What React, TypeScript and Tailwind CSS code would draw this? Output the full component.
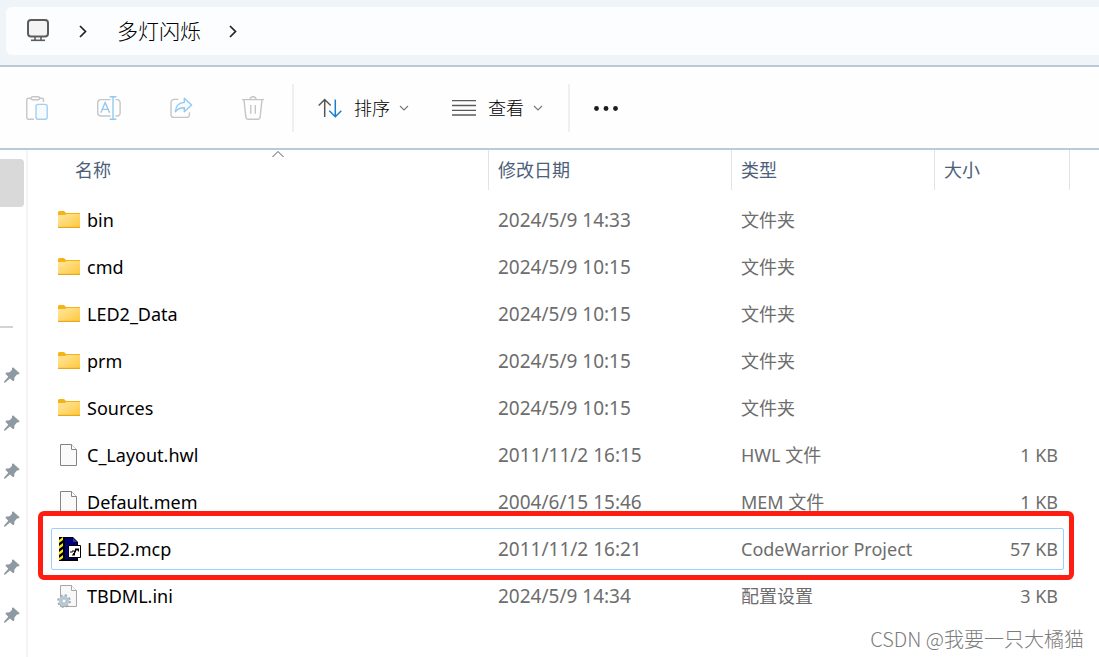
import React from "react";
import clsx from "clsx";

type FileKind = "folder" | "blank" | "mcp" | "ini";

interface FileEntry {
  name: string;
  date: string;
  type: string;
  size: string;
  kind: FileKind;
  selected?: boolean;
}

const files: FileEntry[] = [
  { name: "bin", date: "2024/5/9 14:33", type: "文件夹", size: "", kind: "folder" },
  { name: "cmd", date: "2024/5/9 10:15", type: "文件夹", size: "", kind: "folder" },
  { name: "LED2_Data", date: "2024/5/9 10:15", type: "文件夹", size: "", kind: "folder" },
  { name: "prm", date: "2024/5/9 10:15", type: "文件夹", size: "", kind: "folder" },
  { name: "Sources", date: "2024/5/9 10:15", type: "文件夹", size: "", kind: "folder" },
  { name: "C_Layout.hwl", date: "2011/11/2 16:15", type: "HWL 文件", size: "1 KB", kind: "blank" },
  { name: "Default.mem", date: "2004/6/15 15:46", type: "MEM 文件", size: "1 KB", kind: "blank" },
  { name: "LED2.mcp", date: "2011/11/2 16:21", type: "CodeWarrior Project", size: "57 KB", kind: "mcp", selected: true },
  { name: "TBDML.ini", date: "2024/5/9 14:34", type: "配置设置", size: "3 KB", kind: "ini" },
];

const pins = [0, 1, 2, 3, 4, 5];

/* ---------- Toolbar icons ---------- */

const MonitorIcon = () => (
  <svg width="24" height="24" viewBox="0 0 24 24" fill="none" stroke="#5c5c5c" strokeWidth="2">
    <rect x="2" y="1" width="20" height="16.500" rx="3" fill="#f4f4f4" />
    <path d="M9 17.500v4M15 17.500v4" strokeWidth="1.600" />
    <path d="M5 21.300h14" strokeWidth="1.600" />
  </svg>
);

const ChevronRight = () => (
  <svg width="8" height="14" viewBox="0 0 8 14" fill="none" stroke="#222" strokeWidth="1.700">
    <path d="M1 2 6.500 7.500 1 13" />
  </svg>
);

const ChevronDown = () => (
  <svg width="10" height="8" viewBox="0 0 10 8" fill="none" stroke="#777" strokeWidth="1.100">
    <path d="M1 2l4 4 4-4" />
  </svg>
);

const PasteIcon = () => (
  <svg width="24" height="24" viewBox="0 0 24 24" fill="none" strokeWidth="1.400">
    <path d="M9 23.200H3.500A1.700 1.700 0 0 1 1.800 21.500V4A1.700 1.700 0 0 1 3.500 2.300H6M14.500 2.300h2.300A1.700 1.700 0 0 1 18.500 4v2" stroke="#c6c6c6" />
    <rect x="6" y="0.800" width="8.600" height="3" rx="1.500" stroke="#c6c6c6" />
    <rect x="11" y="8.400" width="11.200" height="14.800" rx="2" stroke="#a4d0ef" fill="#f6fbff" />
  </svg>
);

const RenameIcon = () => (
  <svg width="24" height="24" viewBox="0 0 24 24" fill="none" strokeWidth="1.400">
    <path d="M13.500 3.600H3.800A3.200 3.200 0 0 0 .7 6.800v10A3.200 3.200 0 0 0 3.800 20h9.700M18.500 3.600h1.400a3.200 3.200 0 0 1 3.200 3.200v10a3.200 3.200 0 0 1-3.200 3.200h-1.400" stroke="#c6c6c6" />
    <path d="M3.800 16.800 8.200 6.500l4.400 10.300M5.300 13.400h5.800M16 1v22.300M12.600.8h6.800M12.600 23.300h6.800" stroke="#93c9ef" />
  </svg>
);

const ShareIcon = () => (
  <svg width="24" height="24" viewBox="0 0 24 24" fill="none" strokeWidth="1.400" strokeLinejoin="round">
    <path d="M9.500 3.400H5.200A3.200 3.200 0 0 0 2 6.600v11.600a3.200 3.200 0 0 0 3.200 3.200h12a3.200 3.200 0 0 0 3.200-3.200v-2" stroke="#c6c6c6" />
    <path d="M15.300 2.200 22.600 9l-7.300 6.800v-4.100c-4.300 0-6.900 1.300-9 4 .5-5.400 3.500-9.100 9-9.300z" stroke="#93c9ef" fill="#f6fbff" />
  </svg>
);

const TrashIcon = () => (
  <svg width="24" height="24" viewBox="0 0 24 24" fill="none" stroke="#c6c6c6" strokeWidth="1.400">
    <path d="M1 3.600h22M9 3.400a3 2.600 0 0 1 6 0M3 3.800l1.900 17.600a2 2 0 0 0 2 1.800h10.200a2 2 0 0 0 2-1.800L21 3.800M9.800 9v8.800M14.300 9v8.800" />
  </svg>
);

const SortIcon = () => (
  <svg width="24" height="24" viewBox="0 0 24 24" fill="none" strokeWidth="1.500">
    <path d="M6.700 21V4M.7 9.500l6-6 6 6" stroke="#555" />
    <path d="M17.300 3.500v17M11.300 14.800l6 6 6-6" stroke="#1a7fd0" />
  </svg>
);

const ViewIcon = () => (
  <svg width="24" height="24" viewBox="0 0 24 24" stroke="#5b5b5b" strokeWidth="1.300">
    <path d="M0 4.600h24M0 9.500h24M0 14.400h24M0 19h24" />
  </svg>
);

const MoreIcon = () => (
  <svg width="26" height="6" viewBox="0 0 26 6" fill="#1c1c1c">
    <circle cx="2.500" cy="3.500" r="2.400" />
    <circle cx="12" cy="3.500" r="2.400" />
    <circle cx="21.500" cy="3.500" r="2.400" />
  </svg>
);

const PinIcon = () => (
  <svg width="16" height="16" viewBox="0 0 16 16" fill="#8e9aa2">
    <path d="M9 .3 15.700 6.200 14.800 7.300 13 7.500 10.400 10.500 10.300 13.200 9.200 14.300 6 11.400 1 15.700 0 15.500.1 14.500 4.300 9.700 1.400 6.700 2.500 5.600 5.700 5.200 8 2.800 8 1.200z" />
  </svg>
);

/* ---------- File icons ---------- */

const FolderIcon = () => (
  <svg width="24" height="24" viewBox="0 0 24 24">
    <defs>
      <linearGradient id="folder-face" x1="0" y1="0" x2="1" y2="1">
        <stop offset="0" stopColor="#ffe7a0" />
        <stop offset="1" stopColor="#ffc83c" />
      </linearGradient>
    </defs>
    <path d="M1 4.500q0-1.500 1.500-1.500H7l2 2h14v4H1z" fill="#f5b316" />
    <path d="M1 7h7l1.500-1H23v13.500H1z" fill="url(#folder-face)" />
    <path d="M1 18.800h22V20H1z" fill="#e5a820" />
  </svg>
);

const BlankIcon = () => (
  <svg width="24" height="24" viewBox="0 0 24 24">
    <path d="M3.500 1.500h11l5 5v16h-16z" fill="#fafafa" stroke="#858585" />
    <path d="M14.500 1.500v5h5" fill="#fff" stroke="#858585" />
  </svg>
);

const IniIcon = () => (
  <svg width="24" height="24" viewBox="0 0 24 24">
    <path d="M3.500 1.500h11l5 5v16h-16z" fill="#f8f8f8" stroke="#a6a6a6" />
    <path d="M14.500 1.500v5h5" fill="#fff" stroke="#a6a6a6" />
    <circle cx="7" cy="17" r="5.800" fill="none" stroke="#9ba9b3" strokeWidth="2" strokeDasharray="2.280 2.280" />
    <circle cx="7" cy="17" r="3.700" fill="#fff" stroke="#b9c8d3" strokeWidth="3" />
    <circle cx="7" cy="17" r="2" fill="#fff" stroke="#93a5b3" strokeWidth=".7" />
  </svg>
);

const McpIcon = () => (
  <svg width="24" height="24" viewBox="0 0 24 24">
    <path d="M2 0h14l5 5v19H2z" fill="#000" />
    <path d="M8 1h8v4h4v17H8z" fill="#000078" />
    <path d="M16 1l4 4h-4z" fill="#3a3a8c" />
    <path d="M2 3l4-3v3L2 6zM2 9l4-3v3L2 12zM2 15l4-3v3l-4 3zM2 21l4-3v3l-3 2H2z" fill="#f5ea18" />
    <path d="M11.500 8.500h12v12h-12z" fill="#fff" stroke="#000" />
    <path d="M13 14.500h2v-1h3v-2h4v3h-1v-1h-2v2h-1v3h-3v-1h1v-2h-3z" fill="#000" />
    <path d="M15.500 14.500h1.500v1.500h-1.500z" fill="#fff" />
  </svg>
);

const FileIcon = ({ kind }: { kind: FileKind }) => {
  if (kind === "folder") return <FolderIcon />;
  if (kind === "mcp") return <McpIcon />;
  if (kind === "ini") return <IniIcon />;
  return <BlankIcon />;
};

/* ---------- Sections ---------- */

const AddressBar = () => (
  <header className="border-b-2 border-[#b9cad8] bg-[#eff4f9] pt-[7px] pb-[10px] pl-1.5">
    <nav aria-label="路径" className="flex h-12 items-center rounded-l-md bg-[#fcfdfe] pl-5">
      <button type="button" aria-label="此电脑">
        <MonitorIcon />
      </button>
      <span className="ml-[29px]">
        <ChevronRight />
      </span>
      <button type="button" className="ml-[30px] text-[21px] leading-7 text-black">
        多灯闪烁
      </button>
      <span className="ml-7">
        <ChevronRight />
      </span>
    </nav>
  </header>
);

const Divider = () => <span className="h-12 w-0.5 bg-[#efefef]" />;

const Toolbar = () => (
  <div role="toolbar" className="flex h-[83px] items-center border-b-2 border-[#b9cad8] bg-[#fefefe] pl-[25px] text-lg text-black">
    <div className="mr-[27px] flex gap-12">
      <button type="button" aria-label="粘贴" disabled><PasteIcon /></button>
      <button type="button" aria-label="重命名" disabled><RenameIcon /></button>
      <button type="button" aria-label="共享" disabled><ShareIcon /></button>
      <button type="button" aria-label="删除" disabled><TrashIcon /></button>
    </div>
    <Divider />
    <button type="button" className="ml-6 flex items-center">
      <SortIcon />
      <span className="mr-[9px] ml-3">排序</span>
      <ChevronDown />
    </button>
    <button type="button" className="mr-[25px] ml-[43px] flex items-center">
      <ViewIcon />
      <span className="mr-[9px] ml-3">查看</span>
      <ChevronDown />
    </button>
    <Divider />
    <button type="button" aria-label="更多" className="ml-6">
      <MoreIcon />
    </button>
  </div>
);

const Sidebar = () => (
  <aside className="w-7 shrink-0 border-r-2 border-[#f5f5f5] pt-[9px]">
    <div className="h-12 w-6 rounded-r-sm bg-[#d9d9d9]" />
    <div className="mt-[119px] h-0.5 w-[13px] bg-[#d3d3d3]" />
    <ul className="mt-[39px] flex flex-col gap-8 pl-1">
      {pins.map((pin) => (
        <li key={pin}><PinIcon /></li>
      ))}
    </ul>
  </aside>
);

const HeaderCell = ({ label }: { label: string }) => (
  <th scope="col" className="h-[47px] p-0 align-top font-normal">
    <button type="button" className="flex h-10 w-full items-center border-r border-[#e3e3e3] pl-[9px]">
      {label}
    </button>
  </th>
);

const FileRow = ({ file }: { file: FileEntry }) => (
  <tr className={clsx("h-[47px]", file.selected && "relative")}>
    <td className="p-0 pb-0.5">
      <div className="flex items-center gap-1.5 pl-[29px] text-black">
        <span className="h-6 w-6 shrink-0 [&>svg]:block">
          <FileIcon kind={file.kind} />
        </span>
        <span className="text-lg">{file.name}</span>
      </div>
      {/* selection outline and highlight frame */}
      {file.selected && (
        <>
          <span className="pointer-events-none absolute top-0.5 right-[35px] bottom-[3px] left-[23px] rounded-xs border border-[#99d1ff]" />
          <span className="pointer-events-none absolute top-[-15px] right-[25px] bottom-[-7px] left-2.5 rounded-md border-[5px] border-[#ff1c10]" />
        </>
      )}
    </td>
    <td className="p-0 pl-[9px] text-[19px]">{file.date}</td>
    <td className="p-0 pb-0.5 pl-[9px] text-lg">{file.type}</td>
    <td className="p-0 pr-3 pb-0.5 text-right text-lg">{file.size}</td>
    <td className="p-0" />
  </tr>
);

const FileTable = () => (
  <table className="w-full table-fixed border-collapse text-left font-normal whitespace-nowrap text-[#6d6d6d]">
    <colgroup>
      <col />
      <col className="w-[243px]" />
      <col className="w-[203px]" />
      <col className="w-[135px]" />
      <col className="w-[29px]" />
    </colgroup>
    <thead className="text-lg text-[#4c607a]">
      <tr>
        <th scope="col" className="h-[47px] p-0 align-top font-normal">
          <button type="button" className="flex h-10 w-full border-r border-[#e3e3e3] pl-[39px]">
            <span className="relative flex h-full w-full items-center pl-2">
              名称
              <svg className="absolute top-0 left-1/2 -translate-x-1/2" width="12" height="8" viewBox="0 0 12 8" fill="none" stroke="#555">
                <path d="M.5 7 6 1.500l5.500 5.500" />
              </svg>
            </span>
          </button>
        </th>
        <HeaderCell label="修改日期" />
        <HeaderCell label="类型" />
        <HeaderCell label="大小" />
        <td />
      </tr>
    </thead>
    <tbody>
      {files.map((file) => (
        <FileRow key={file.name} file={file} />
      ))}
    </tbody>
  </table>
);

export default function App() {
  return (
    <div className="relative flex min-h-screen flex-col overflow-hidden bg-white font-['Noto_Sans','Noto_Sans_CJK_SC',sans-serif] font-light">
      <AddressBar />
      <Toolbar />
      <main className="flex flex-1">
        <Sidebar />
        <div className="min-w-0 flex-1">
          <FileTable />
        </div>
      </main>
      <p className="absolute right-[15px] bottom-1 font-['Noto_Sans_CJK_SC',sans-serif] text-xl text-[#7c7c7c]">
        CSDN @我要一只大橘猫
      </p>
    </div>
  );
}
